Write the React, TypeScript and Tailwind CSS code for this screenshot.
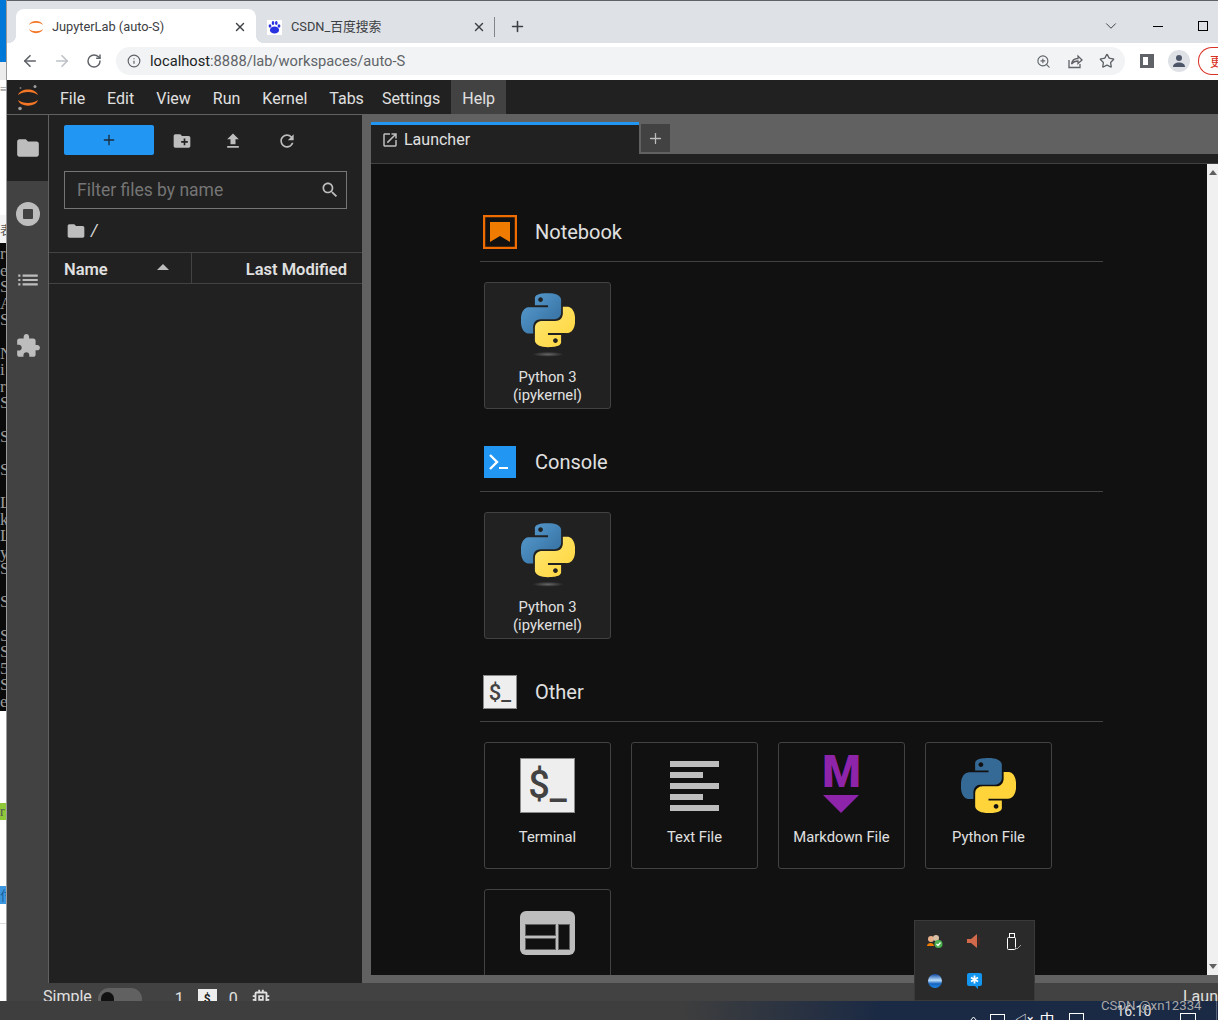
import {
  ArrowLeft,
  ArrowRight,
  ChevronDown,
  Info,
  Plus,
  RotateCw,
  Star,
  X,
  ZoomIn,
} from "lucide-react";

const BLUE_HALF =
  "M14.25.18l.9.2.73.26.59.3.45.32.34.34.25.34.16.33.1.3.04.26.02.2-.01.13V8.5l-.05.63-.13.55-.21.46-.26.38-.3.31-.33.25-.35.19-.35.14-.33.1-.3.07-.26.04-.21.02H8.77l-.69.05-.59.14-.5.22-.41.27-.33.32-.27.35-.2.36-.15.37-.1.35-.07.32-.04.27-.02.21v3.06H3.17l-.21-.03-.28-.07-.32-.12-.35-.18-.36-.26-.36-.36-.35-.46-.32-.59-.28-.73-.21-.88-.14-1.05-.05-1.23.06-1.22.16-1.04.24-.87.32-.71.36-.57.4-.44.42-.33.42-.24.4-.16.36-.1.32-.05.24-.01h.16l.06.01h8.16v-.83H6.18l-.01-2.75-.02-.37.05-.34.11-.31.17-.28.25-.26.31-.23.38-.2.44-.18.51-.15.58-.12.64-.1.71-.06.77-.04.84-.02 1.27.05zm-6.3 1.98l-.23.33-.08.41.08.41.23.34.33.22.41.09.41-.09.33-.22.23-.34.08-.41-.08-.41-.23-.33-.33-.22-.41-.09-.41.09z";
const YELLOW_HALF =
  "M21.04 6.11l.28.06.32.12.35.18.36.27.36.35.35.47.32.59.28.73.21.88.14 1.04.05 1.23-.06 1.23-.16 1.04-.24.86-.32.71-.36.57-.4.45-.42.33-.42.24-.4.16-.36.09-.32.05-.24.02-.16-.01h-8.22v.82h5.84l.01 2.76.02.36-.05.34-.11.31-.17.29-.25.25-.31.24-.38.2-.44.17-.51.15-.58.13-.64.09-.71.07-.77.04-.84.01-1.27-.04-1.07-.14-.9-.2-.73-.25-.59-.3-.45-.33-.34-.34-.25-.34-.16-.33-.1-.3-.04-.25-.02-.2.01-.13v-5.34l.05-.64.13-.54.21-.46.26-.38.3-.32.33-.24.35-.2.35-.14.33-.1.3-.06.26-.04.21-.02.13-.01h5.84l.69-.05.59-.14.5-.21.41-.28.33-.32.27-.35.2-.36.15-.36.1-.35.07-.32.04-.28.02-.21V6.07h2.09l.14.01zm-6.47 14.25l-.23.33-.08.41.08.41.23.33.33.23.41.08.41-.08.33-.23.23-.33.08-.41-.08-.41-.23-.33-.33-.23-.41-.08-.41.08z";

const SLIVER = "r,e,S,A,S,,N,i,r,S,,S,,S,,L,k,L,y,S,,S,,S,S,5,S,e".split(",");

function MdIcon({ d, size, className }: { d: string; size: number; className?: string }) {
  return (
    <svg width={size} height={size} viewBox="0 0 24 24" className={className} fill="currentColor">
      <path d={d} />
    </svg>
  );
}

function PythonFlat() {
  return (
    <svg width="55" height="55" viewBox="0 0 24 24">
      <path d={BLUE_HALF} fill="#366a96" />
      <path d={YELLOW_HALF} fill="#ffd43b" />
    </svg>
  );
}

function KernelLogo() {
  return (
    <svg width="54" height="70" viewBox="0 0 24 31">
      <defs>
        <linearGradient id="pyBlue" x1="0" y1="0" x2="1" y2="1">
          <stop offset="0" stopColor="#5a9fd4" />
          <stop offset="1" stopColor="#306998" />
        </linearGradient>
        <linearGradient id="pyYellow" x1="0" y1="0" x2="1" y2="1">
          <stop offset="0" stopColor="#ffe873" />
          <stop offset="1" stopColor="#ffd43b" />
        </linearGradient>
        <radialGradient id="pyShadow">
          <stop offset="0" stopColor="#666666" />
          <stop offset="1" stopColor="#212121" />
        </radialGradient>
      </defs>
      <path d={BLUE_HALF} fill="url(#pyBlue)" />
      <path d={YELLOW_HALF} fill="url(#pyYellow)" />
      <ellipse cx="12" cy="27.2" rx="7" ry="1.1" fill="url(#pyShadow)" />
    </svg>
  );
}

function Dollar({ className }: { className: string }) {
  return (
    <div className={`flex items-center justify-center bg-[#eeeeee] border border-[#8a8a8a] font-['Roboto',sans-serif] font-medium text-[#424242] ${className}`}>
      $_
    </div>
  );
}

function Heading({ icon, title }: { icon: React.ReactNode; title: string }) {
  return (
    <div className="h-[48px] w-[623px] border-b border-[#424242]">
      <div className="flex h-[36px] items-center">
        <div className="ml-[3px] flex w-[34px] justify-center">{icon}</div>
        <span className="ml-[18px] text-[20px] text-[#e0e0e0]">{title}</span>
      </div>
    </div>
  );
}

function Card({ label, pt, dark, children }: { label?: string; pt: string; dark?: boolean; children: React.ReactNode }) {
  return (
    <div className={`h-[127px] w-[127px] rounded-[3px] border border-[#424242] ${dark ? "bg-[#212121]" : "bg-[#111111]"}`}>
      <div className={`flex h-[86px] justify-center overflow-hidden ${pt}`}>{children}</div>
      <div className="text-center text-[14.8px] leading-[17.5px] text-[#e0e0e0]">{label}</div>
    </div>
  );
}

function Section({ icon, title, children }: { icon: React.ReactNode; title: string; children: React.ReactNode }) {
  return (
    <div className="mb-[35px]">
      <Heading icon={icon} title={title} />
      <div className="mt-[20px] flex w-[623px] flex-wrap gap-[20px] pl-[4px]">{children}</div>
    </div>
  );
}

function Chrome() {
  return (
    <div className="shrink-0 font-['Roboto',sans-serif]">
      <div className="flex h-[43px] items-end border-t border-[#5f6368] bg-[#dee1e6] pl-[9px] text-[12.8px]">
        <div className="relative flex h-[34px] w-[240px] items-center rounded-t-[8px] bg-white pl-[12px] pt-[2px] text-[#3c4043]">
          <span className="absolute bottom-0 left-[-8px] h-[8px] w-[8px] bg-[radial-gradient(circle_at_0_0,transparent_8px,white_8px)]" />
          <span className="absolute bottom-0 right-[-8px] h-[8px] w-[8px] bg-[radial-gradient(circle_at_100%_0,transparent_8px,white_8px)]" />
          <svg width="16" height="16" viewBox="0 0 16 16" fill="#f37726">
            <path d="M1 6 C2.5 0.5 13.5 0.5 15 6 C12 3 4 3 1 6Z" />
            <path d="M1 10 C2.5 15.5 13.5 15.5 15 10 C12 13 4 13 1 10Z" />
          </svg>
          <span className="ml-[8px] flex-1">JupyterLab (auto-S)</span>
          <X size={14} strokeWidth={2.4} className="mr-[9px]" />
        </div>
        <div className="flex h-[34px] w-[239px] items-center pl-[11px] pt-[2px] text-[#3c4043]">
          <svg width="15" height="15" viewBox="0 0 15 15">
            <rect width="15" height="15" fill="#ffffff" />
            <g fill="#2932e1">
              <ellipse cx="3" cy="6" rx="1.4" ry="1.8" />
              <ellipse cx="6" cy="3" rx="1.3" ry="1.9" />
              <ellipse cx="9.3" cy="3" rx="1.3" ry="1.9" />
              <ellipse cx="12" cy="6" rx="1.4" ry="1.8" />
              <ellipse cx="7.5" cy="10" rx="4.6" ry="3.6" />
            </g>
          </svg>
          <span className="ml-[9px] flex-1 font-['Roboto','Noto_Sans_CJK_SC',sans-serif]">CSDN_百度搜索</span>
          <X size={14} strokeWidth={2.4} className="mr-[8px] text-[#3c4043]" />
          <span className="h-[20px] w-px bg-[#80868b]" />
        </div>
        <div className="flex h-[34px] flex-1 items-center">
          <Plus size={17} strokeWidth={2.2} className="ml-[14px] text-[#3c4043]" />
          <div className="flex-1" />
          <ChevronDown size={18} strokeWidth={1.1} className="mr-[33px] text-[#202124]" />
          <span className="mr-[35px] h-px w-[10px] bg-black" />
          <span className="mr-[10px] h-[10px] w-[10px] border border-black" />
        </div>
      </div>
      <div className="flex h-[37px] items-center bg-white pb-[1px] text-[#5f6368]">
        <ArrowLeft size={18} strokeWidth={2.2} className="ml-[14px]" />
        <ArrowRight size={18} strokeWidth={2.2} className="ml-[14px] text-[#bdc1c6]" />
        <RotateCw size={16} strokeWidth={2.2} className="ml-[15px]" />
        <div className="ml-[14px] flex h-[28px] w-[1009px] shrink-0 items-center rounded-full bg-[#f1f3f4] pl-[11px]">
          <Info size={14} strokeWidth={2} />
          <span className="ml-[9px] flex-1 text-[14.7px]">
            <span className="text-[#202124]">localhost</span>:8888/lab/workspaces/auto-S
          </span>
          <ZoomIn size={15} strokeWidth={1.8} className="mr-[16px]" />
          <svg width="16" height="16" viewBox="0 0 16 16" fill="none" stroke="currentColor" strokeWidth="1.3" className="mr-[16px]">
            <path d="M2 7v7.5h11V11" />
            <path d="M4.5 11c.5-3.5 3-5.5 6.5-5.5V3l4 4-4 3.5V8c-3 0-5 1-6.500 3z" />
          </svg>
          <Star size={16} strokeWidth={2} className="mr-[10px]" />
        </div>
        <span className="ml-[15px] h-[14px] w-[14px] shrink-0 border-[3px] border-r-[6px] border-[#5f6368] bg-white" />
        <div className="ml-[14px] flex h-[22px] w-[22px] shrink-0 items-center justify-center rounded-full bg-[#dee1e6]">
          <svg width="14" height="14" viewBox="0 0 14 14" fill="#4d5669">
            <circle cx="7" cy="4" r="3" />
            <path d="M1 13c0-3 2.500-4.500 6-4.500s6 1.500 6 4.500z" />
          </svg>
        </div>
        <div className="ml-[8px] flex h-[28px] min-w-0 flex-1 items-center overflow-hidden rounded-l-full border border-r-0 border-[#d93025] pl-[11px] font-['Noto_Sans_CJK_SC',sans-serif] text-[13px] text-[#d93025]">
          更
        </div>
      </div>
    </div>
  );
}

function JupyterLogo() {
  return (
    <svg width="22" height="27" viewBox="0 0 22 27" className="ml-[10px]">
      <path d="M1 11 C3 3.500 19 3.500 21 11 C16 7 6 7 1 11Z" fill="#f37726" />
      <path d="M1 16 C3 23.500 19 23.500 21 16 C16 20 6 20 1 16Z" fill="#f37726" />
      <circle cx="18" cy="2.500" r="1.500" fill="#9e9e9e" />
      <circle cx="3.500" cy="4" r="1" fill="#757575" />
      <circle cx="3" cy="24.500" r="1.800" fill="#9e9e9e" />
    </svg>
  );
}

function MenuBar() {
  const items = ["File", "Edit", "View", "Run", "Kernel", "Tabs", "Settings", "Help"];
  return (
    <div className="flex h-[34px] shrink-0 items-center bg-[#212121] text-[16px] text-[#e0e0e0]">
      <JupyterLogo />
      <div className="ml-[10px] flex h-full">
        {items.map((m) => (
          <div
            key={m}
            className={`flex h-full items-center px-[11px] pt-[3px] ${m === "Help" ? "bg-[#424242]" : ""} ${m === "Tabs" ? "mr-[-4px]" : ""}`}
          >
            {m}
          </div>
        ))}
      </div>
    </div>
  );
}

function SideRail() {
  return (
    <div className="flex w-[42px] shrink-0 flex-col border-r border-[#616161] bg-[#424242] text-[#bdbdbd]">
      <div className="flex h-[66px] items-center justify-center bg-[#212121]">
        <MdIcon size={26} d="M10 4H4c-1.100 0-1.990.9-1.990 2L2 18c0 1.100.9 2 2 2h16c1.100 0 2-.9 2-2V8c0-1.100-.9-2-2-2h-8l-2-2z" />
      </div>
      <div className="flex h-[66px] items-center justify-center">
        <svg width="24" height="24" viewBox="0 0 24 24">
          <circle cx="12" cy="12" r="12" fill="#bdbdbd" />
          <rect x="7" y="7" width="10" height="10" rx="1" fill="#424242" />
        </svg>
      </div>
      <div className="flex h-[66px] items-center justify-center">
        <MdIcon size={26} d="M3 13h2v-2H3v2zm0 4h2v-2H3v2zm0-8h2V7H3v2zm4 4h14v-2H7v2zm0 4h14v-2H7v2zM7 7v2h14V7H7z" />
      </div>
      <div className="flex h-[66px] items-center justify-center">
        <MdIcon size={26} d="M20.500 11H19V7c0-1.100-.9-2-2-2h-4V3.500C13 2.120 11.880 1 10.500 1S8 2.120 8 3.500V5H4c-1.100 0-1.990.9-1.990 2v3.800H3.500c1.490 0 2.700 1.210 2.700 2.700s-1.210 2.700-2.700 2.700H2V20c0 1.100.9 2 2 2h3.800v-1.500c0-1.490 1.210-2.700 2.700-2.700 1.490 0 2.700 1.210 2.700 2.700V22H17c1.100 0 2-.9 2-2v-4h1.500c1.380 0 2.500-1.120 2.500-2.500S21.880 11 20.500 11z" />
      </div>
    </div>
  );
}

function FilePanel() {
  return (
    <div className="flex w-[313px] shrink-0 flex-col bg-[#212121] text-[#e0e0e0]">
      <div className="flex h-[56px] items-start pl-[15px] pt-[10px] text-[#bdbdbd]">
        <div className="flex h-[30px] w-[90px] items-center justify-center rounded-[2px] bg-[#2196f3]">
          <Plus size={16} strokeWidth={2} className="text-[#1c2b3a]" />
        </div>
        <MdIcon className="ml-[18px] mt-[6px]" size={20} d="M20 6h-8l-2-2H4c-1.110 0-1.990.89-1.990 2L2 18c0 1.110.89 2 2 2h16c1.110 0 2-.89 2-2V8c0-1.110-.89-2-2-2zm-1 8h-3v3h-2v-3h-3v-2h3V9h2v3h3v2z" />
        <MdIcon className="ml-[31px] mt-[6px]" size={20} d="M9 16h6v-6h4l-7-7-7 7h4zm-4 2h14v2H5z" />
        <MdIcon className="ml-[34px] mt-[6px]" size={20} d="M17.650 6.350C16.200 4.900 14.210 4 12 4c-4.420 0-7.990 3.580-7.990 8s3.570 8 7.990 8c3.730 0 6.840-2.550 7.730-6h-2.080c-.82 2.330-3.040 4-5.650 4-3.310 0-6-2.690-6-6s2.690-6 6-6c1.660 0 3.140.69 4.220 1.780L13 11h7V4l-2.350 2.350z" />
      </div>
      <div className="ml-[15px] flex h-[38px] w-[283px] items-center border border-[#757575] pl-[12px] text-[17.500px] text-[#757575]">
        <span className="flex-1">Filter files by name</span>
        <MdIcon className="mr-[6px] text-[#bdbdbd]" size={20} d="M15.500 14h-.79l-.28-.27C15.410 12.590 16 11.110 16 9.500 16 5.910 13.090 3 9.500 3S3 5.910 3 9.500 5.910 16 9.500 16c1.610 0 3.090-.59 4.230-1.570l.27.28v.79l5 4.990L20.490 19l-4.990-5zm-6 0C7.010 14 5 11.990 5 9.500S7.010 5 9.500 5 14 7.010 14 9.500 11.990 14 9.500 14z" />
      </div>
      <div className="flex h-[43px] items-center pl-[17px] text-[#bdbdbd]">
        <MdIcon size={20} d="M10 4H4c-1.100 0-1.990.9-1.990 2L2 18c0 1.100.9 2 2 2h16c1.100 0 2-.9 2-2V8c0-1.100-.9-2-2-2h-8l-2-2z" />
        <span className="ml-[5px] text-[16px] italic text-[#e0e0e0]">/</span>
      </div>
      <div className="flex h-[32px] items-center border-y border-[#424242] text-[16.500px] font-semibold">
        <div className="flex h-full w-[143px] items-center border-r border-[#424242] pl-[15px]">
          <span className="mt-[4px] flex-1">Name</span>
          <span className="mb-[2px] mr-[22px] h-0 w-0 border-x-[6px] border-b-[6px] border-x-transparent border-b-[#bdbdbd]" />
        </div>
        <div className="mt-[4px] flex-1 pr-[15px] text-right">Last Modified</div>
      </div>
    </div>
  );
}

function Launcher() {
  return (
    <div className="flex min-h-0 flex-1 flex-col bg-[#616161] pb-[8px]">
      <div className="flex h-[39px] shrink-0 items-end">
        <div className="flex h-[32px] w-[268px] items-center border-t-[3px] border-[#2196f3] bg-[#212121] pl-[10px] text-[16px] text-[#e0e0e0]">
          <MdIcon className="text-[#bdbdbd]" size={18} d="M19 19H5V5h7V3H5c-1.110 0-2 .9-2 2v14c0 1.100.89 2 2 2h14c1.100 0 2-.9 2-2v-7h-2v7zM14 3v2h3.590l-9.830 9.830 1.410 1.410L19 6.410V10h2V3h-7z" />
          <span className="ml-[5px]">Launcher</span>
        </div>
        <div className="mb-[1px] ml-px flex h-[30px] w-[31px] items-center justify-center border border-[#616161] bg-[#424242]">
          <Plus size={17} strokeWidth={1.8} className="text-[#bdbdbd]" />
        </div>
      </div>
      <div className="h-[10px] shrink-0 border-b border-[#424242] bg-[#212121]" />
      <div className="flex min-h-0 flex-1 bg-[#111111]">
        <div className="min-w-0 flex-1 overflow-hidden pl-[109px] pt-[50px]">
          <Section
            title="Notebook"
            icon={
              <svg width="34" height="34" viewBox="0 0 34 34">
                <rect x="1" y="1" width="32" height="32" fill="none" stroke="#ef6c00" strokeWidth="2.500" />
                <path d="M7 7h20v20l-10-6-10 6z" fill="#ef7c00" />
              </svg>
            }
          >
            <Card dark pt="pt-[10px]" label="Python 3 (ipykernel)">
              <KernelLogo />
            </Card>
          </Section>
          <Section
            title="Console"
            icon={
              <svg width="32" height="32" viewBox="0 0 32 32">
                <rect width="32" height="32" fill="#2196f3" />
                <path d="M6 9l7 7-7 7" fill="none" stroke="#ffffff" strokeWidth="2.400" />
                <rect x="15" y="21" width="9" height="2" fill="#ffffff" />
              </svg>
            }
          >
            <Card dark pt="pt-[10px]" label="Python 3 (ipykernel)">
              <KernelLogo />
            </Card>
          </Section>
          <Section title="Other" icon={<Dollar className="h-[34px] w-[34px] text-[22px]" />}>
            <Card pt="pt-[15px]" label="Terminal">
              <Dollar className="h-[55px] w-[55px] text-[38px]" />
            </Card>
            <Card pt="pt-[18px]" label="Text File">
              <svg width="49" height="50" viewBox="0 0 49 50" fill="#bdbdbd">
                <rect width="49" height="6" />
                <rect y="11" width="33" height="6" />
                <rect y="22" width="49" height="6" />
                <rect y="33" width="33" height="6" />
                <rect y="44" width="49" height="6" />
              </svg>
            </Card>
            <Card pt="pt-[9px]" label="Markdown File">
              <div className="flex flex-col items-center">
                <span className="h-[40px] text-[44px] font-black leading-[40px] text-[#8e24aa]">M</span>
                <svg width="36" height="18" viewBox="0 0 36 18" className="mt-[3px]">
                  <path d="M0 0h36L18 18z" fill="#8e24aa" />
                </svg>
              </div>
            </Card>
            <Card pt="pt-[15px]" label="Python File">
              <PythonFlat />
            </Card>
            <Card pt="pt-[21px]">
              <svg width="55" height="44" viewBox="0 0 55 44">
                <rect width="55" height="44" rx="6" fill="#bdbdbd" />
                <rect x="5.500" y="13.500" width="30" height="11" fill="#111111" stroke="#616161" />
                <rect x="5.500" y="27.500" width="30" height="11" fill="#111111" stroke="#616161" />
                <rect x="38.500" y="13.500" width="11" height="25" fill="#111111" stroke="#616161" />
              </svg>
            </Card>
          </Section>
        </div>
        <div className="flex w-[11px] shrink-0 flex-col items-center justify-between bg-[#f0f0f0] py-[6px]">
          <span className="h-0 w-0 border-x-[4px] border-b-[5px] border-x-transparent border-b-[#606060]" />
          <span className="h-0 w-0 border-x-[4px] border-t-[5px] border-x-transparent border-t-[#606060]" />
        </div>
      </div>
    </div>
  );
}

function StatusBar() {
  return (
    <div className="flex h-[18px] shrink-0 items-start overflow-hidden bg-[#424242] pl-[36px] pt-[4px] text-[16px] leading-[20px] text-[#e0e0e0]">
      <span>Simple</span>
      <span className="ml-[6px] mt-[1px] flex h-[22px] w-[44px] shrink-0 items-center rounded-full bg-[#616161] pl-[3px]">
        <span className="h-[14px] w-[13px] rounded-full bg-[#111111]" />
      </span>
      <span className="ml-[33px] mt-[2px]">1</span>
      <span className="ml-[14px] mt-[2px] flex h-[20px] w-[19px] shrink-0 justify-center bg-[#eeeeee] text-[12px] font-bold text-[#212121]">$</span>
      <span className="ml-[12px] mt-[2px]">0</span>
      <MdIcon className="ml-[12px]" size={22} d="M15 9H9v6h6V9zm-2 4h-2v-2h2v2zm8-2V9h-2V7c0-1.100-.9-2-2-2h-2V3h-2v2h-2V3H9v2H7c-1.100 0-2 .9-2 2v2H3v2h2v2H3v2h2v2c0 1.100.9 2 2 2h2v2h2v-2h2v2h2v-2h2c1.100 0 2-.9 2-2v-2h2v-2h-2v-2h2zm-4 6H7V7h10v10z" />
      <span className="ml-auto w-[35px] overflow-hidden whitespace-nowrap">Launcher</span>
    </div>
  );
}

function BackgroundSliver() {
  return (
    <div className="flex w-[7px] shrink-0 flex-col overflow-hidden border-r border-[#9a9a9a] bg-white font-['Liberation_Serif',serif] text-[17px]">
      <div className="h-[62px] bg-[#0078d7]" />
      <div className="h-[18px] bg-[#ececec]" />
      <div className="h-[135px] bg-white text-[12px] text-[#777777]">≡</div>
      <div className="h-[28px] bg-[#f4f4f4] pt-[8px] font-['Noto_Sans_CJK_SC',sans-serif] text-[12px] leading-[14px] text-[#555555]">表</div>
      <div className="h-[468px] bg-[#0a0a0a] pt-[3px] text-[#9a9a9a]">
        {SLIVER.map((c, i) => (
          <div key={i} className="h-[16.600px] leading-[16.600px]">
            {c}
          </div>
        ))}
      </div>
      <div className="h-[92px]" />
      <div className="h-[17px] bg-[#8fc93a] text-[14px] leading-[17px] text-[#555555]">r</div>
      <div className="h-[66px]" />
      <div className="h-[18px] bg-[#3b97e0] font-['Noto_Sans_CJK_SC',sans-serif] text-[13px] leading-[18px] text-[#1d5f99]">付</div>
      <div className="h-[20px] border-b border-[#dddddd]" />
    </div>
  );
}

function Tray() {
  return (
    <div className="absolute left-[914px] top-[920px] grid h-[81px] w-[121px] grid-cols-3 border border-[#3a3a3a] bg-[#2a2a2a]">
      <div className="flex items-center justify-center">
        <svg width="17" height="16" viewBox="0 0 17 16">
          <circle cx="5" cy="6" r="3" fill="#e8b08a" />
          <circle cx="10" cy="5" r="3" fill="#d9c0a5" />
          <path d="M1 13c0-4 7-4 7 0z" fill="#ef7c00" />
          <circle cx="12.500" cy="11" r="4" fill="#4caf50" />
          <path d="M10.500 11l1.500 1.500 2.500-3" fill="none" stroke="#ffffff" strokeWidth="1.200" />
        </svg>
      </div>
      <div className="flex items-center justify-center">
        <svg width="16" height="16" viewBox="0 0 16 16">
          <path d="M1 6h4l6-5v14l-6-5H1z" fill="#d2694a" />
          <path d="M13 4v8" stroke="#5a2418" strokeWidth="1.500" />
        </svg>
      </div>
      <div className="flex items-center justify-center">
        <svg width="14" height="17" viewBox="0 0 14 17" fill="none" stroke="#ffffff">
          <rect x="2.500" y="0.500" width="5" height="4" />
          <rect x="0.500" y="4.500" width="8" height="12" rx="1" />
          <path d="M8 14l2 2 4-4" stroke="#9e9e9e" />
        </svg>
      </div>
      <div className="flex items-center justify-center">
        <svg width="14" height="14" viewBox="0 0 14 14">
          <defs>
            <linearGradient id="globe" x1="0" y1="0" x2="0" y2="1">
              <stop offset="0" stopColor="#0d47a1" />
              <stop offset="0.45" stopColor="#bbdefb" />
              <stop offset="0.7" stopColor="#1565c0" />
              <stop offset="1" stopColor="#1e88e5" />
            </linearGradient>
          </defs>
          <circle cx="7" cy="7" r="7" fill="url(#globe)" />
        </svg>
      </div>
      <div className="flex items-center justify-center">
        <svg width="15" height="16" viewBox="0 0 15 16">
          <path d="M2 0h11a2 2 0 0 1 2 2v9a2 2 0 0 1-2 2h-2v3l-3-3H2a2 2 0 0 1-2-2V2a2 2 0 0 1 2-2z" fill="#1296f0" />
          <path d="M7.500 2.500v8M4 4.500l7 4M11 4.500l-7 4" stroke="#ffffff" strokeWidth="1.800" />
        </svg>
      </div>
    </div>
  );
}

function Taskbar() {
  return (
    <div className="flex h-[19px] shrink-0 items-start overflow-hidden bg-[linear-gradient(90deg,#3e3e3e_0%,#3e3e3e_56%,#1b2a44_72%,#1b2a44_100%)] pl-[969px] font-['Roboto','Noto_Sans_CJK_SC',sans-serif] text-white">
      <svg width="9" height="6" viewBox="0 0 9 6" fill="none" stroke="#ffffff" className="mt-[15px]">
        <path d="M1 5l3.500-4 3.500 4" />
      </svg>
      <span className="ml-[12px] mt-[13px] h-[10px] w-[15px] border border-white" />
      <span className="ml-[10px] mt-[12px] text-[12px] leading-[14px]">◁×</span>
      <span className="ml-[6px] mt-[10px] text-[15px] leading-[18px]">中</span>
      <span className="ml-[15px] mt-[12px] h-[10px] w-[15px] border border-white" />
      <span className="ml-[32px] mt-[2px] text-[14px] leading-[16px] text-[#e8e8e8]">16:10</span>
      <span className="ml-[29px] mt-[12px] h-[10px] w-[16px] border border-white" />
      <span className="ml-[20px] h-full w-px bg-[#5a6478]" />
    </div>
  );
}

export default function App() {
  return (
    <div className="relative flex h-[1020px] w-[1218px] flex-col overflow-hidden font-['Roboto',sans-serif]">
      <div className="flex h-[1001px] shrink-0">
        <BackgroundSliver />
        <div className="flex min-w-0 flex-1 flex-col">
          <Chrome />
          <MenuBar />
          <div className="flex min-h-0 flex-1 border-t border-[#616161]">
            <SideRail />
            <FilePanel />
            <div className="w-[9px] shrink-0 bg-[#616161]" />
            <Launcher />
          </div>
          <StatusBar />
        </div>
      </div>
      <Taskbar />
      <Tray />
      <span className="absolute left-[1101px] top-[996px] text-[13.200px] text-[#a8a8a8]">CSDN @xn12334</span>
    </div>
  );
}
